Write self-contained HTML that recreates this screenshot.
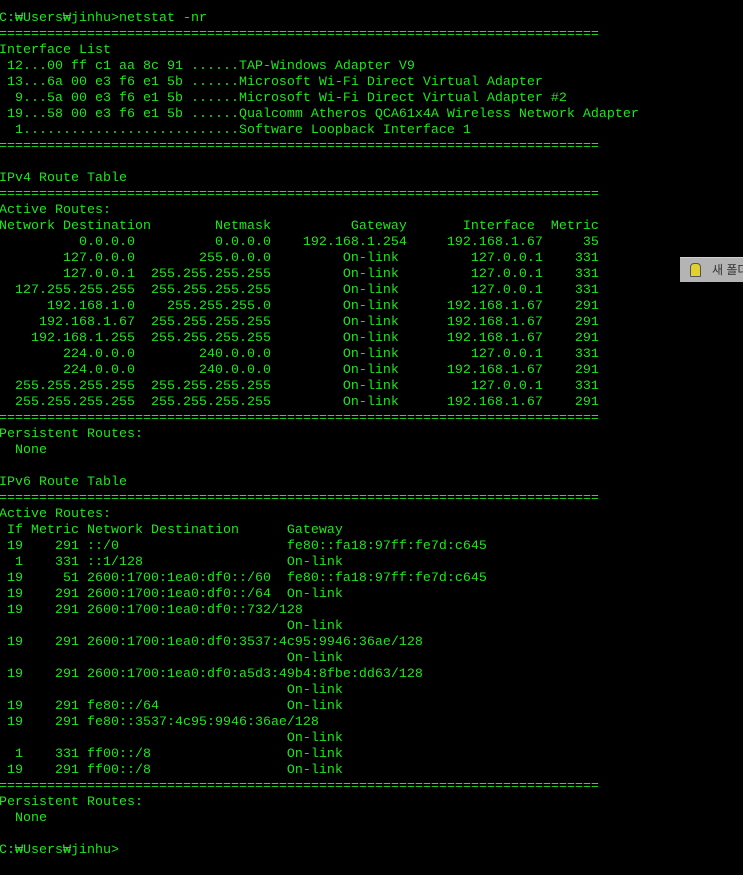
<!DOCTYPE html>
<html><head><meta charset="utf-8"><style>
html,body{margin:0;padding:0;background:#000;width:743px;height:875px;overflow:hidden;position:relative}
pre{position:absolute;left:-1px;top:11px;margin:0;font-family:"Liberation Mono",monospace;font-size:13.333px;line-height:16px;color:#1ee61e;white-space:pre}
.tip{position:absolute;left:680px;top:257px;width:70px;height:24px;background:#b4b4b4;border-top:1px solid #d0d0d0}
.tip .ic{position:absolute;left:10px;top:5px;width:9px;height:12px;background:#e0d030;border-radius:4px 4px 1px 1px;border:1px solid #555}
.tip span{position:absolute;left:32px;top:3px;font-family:"Liberation Sans","Noto Sans CJK KR",sans-serif;font-size:12px;color:#333;white-space:nowrap}
</style></head><body>
<pre>C:₩Users₩jinhu&gt;netstat -nr
===========================================================================
Interface List
 12...00 ff c1 aa 8c 91 ......TAP-Windows Adapter V9
 13...6a 00 e3 f6 e1 5b ......Microsoft Wi-Fi Direct Virtual Adapter
  9...5a 00 e3 f6 e1 5b ......Microsoft Wi-Fi Direct Virtual Adapter #2
 19...58 00 e3 f6 e1 5b ......Qualcomm Atheros QCA61x4A Wireless Network Adapter
  1...........................Software Loopback Interface 1
===========================================================================

IPv4 Route Table
===========================================================================
Active Routes:
Network Destination        Netmask          Gateway       Interface  Metric
          0.0.0.0          0.0.0.0    192.168.1.254     192.168.1.67     35
        127.0.0.0        255.0.0.0         On-link         127.0.0.1    331
        127.0.0.1  255.255.255.255         On-link         127.0.0.1    331
  127.255.255.255  255.255.255.255         On-link         127.0.0.1    331
      192.168.1.0    255.255.255.0         On-link      192.168.1.67    291
     192.168.1.67  255.255.255.255         On-link      192.168.1.67    291
    192.168.1.255  255.255.255.255         On-link      192.168.1.67    291
        224.0.0.0        240.0.0.0         On-link         127.0.0.1    331
        224.0.0.0        240.0.0.0         On-link      192.168.1.67    291
  255.255.255.255  255.255.255.255         On-link         127.0.0.1    331
  255.255.255.255  255.255.255.255         On-link      192.168.1.67    291
===========================================================================
Persistent Routes:
  None

IPv6 Route Table
===========================================================================
Active Routes:
 If Metric Network Destination      Gateway
 19    291 ::/0                     fe80::fa18:97ff:fe7d:c645
  1    331 ::1/128                  On-link
 19     51 2600:1700:1ea0:df0::/60  fe80::fa18:97ff:fe7d:c645
 19    291 2600:1700:1ea0:df0::/64  On-link
 19    291 2600:1700:1ea0:df0::732/128
                                    On-link
 19    291 2600:1700:1ea0:df0:3537:4c95:9946:36ae/128
                                    On-link
 19    291 2600:1700:1ea0:df0:a5d3:49b4:8fbe:dd63/128
                                    On-link
 19    291 fe80::/64                On-link
 19    291 fe80::3537:4c95:9946:36ae/128
                                    On-link
  1    331 ff00::/8                 On-link
 19    291 ff00::/8                 On-link
===========================================================================
Persistent Routes:
  None

C:₩Users₩jinhu&gt;</pre>
<div class="tip"><div class="ic"></div><span>새 폴더</span></div>
</body></html>
